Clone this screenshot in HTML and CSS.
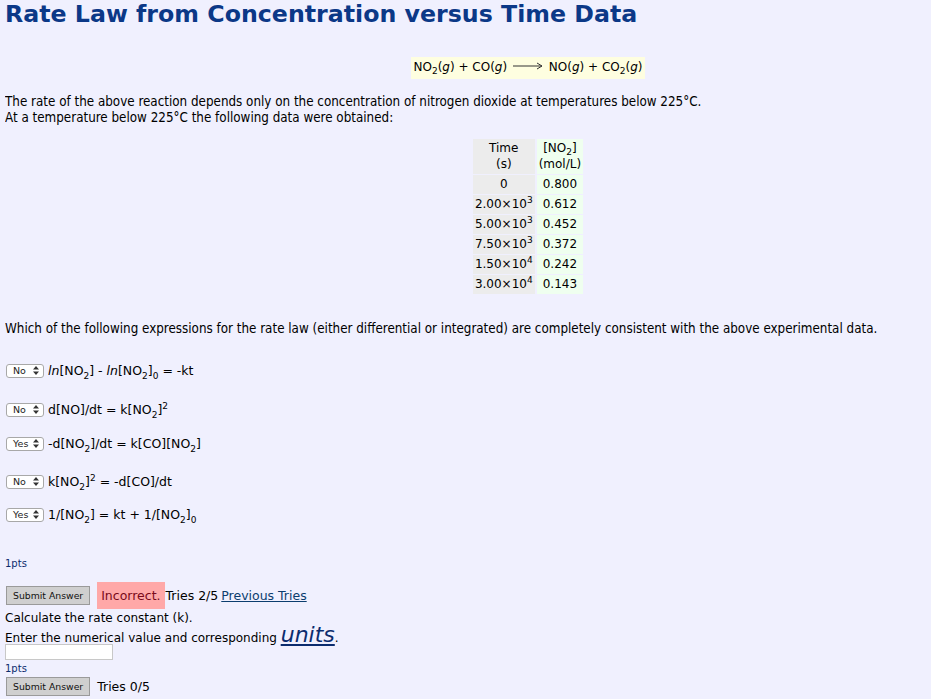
FILE: index.html
```html
<!DOCTYPE html>
<html lang="en">
<head>
    <meta charset="UTF-8">
    <title>Rate Law from Concentration versus Time Data</title>
    <link rel="stylesheet" href="styles.css">
</head>
<body>
    <h1 class="title">Rate Law from Concentration versus Time Data</h1>

    <div class="centered">
        <span class="reaction">NO<sub>2</sub>(<i>g</i>) + CO(<i>g</i>)
            <svg class="arrow" width="32" height="8" viewBox="0 0 32 8"><path d="M1 4H30M25 1L30 4L25 7" fill="none" stroke="#333" stroke-width="1"/></svg>
            NO(<i>g</i>) + CO<sub>2</sub>(<i>g</i>)</span>
    </div>

    <p class="intro">The rate of the above reaction depends only on the concentration of nitrogen dioxide at temperatures below 225°C.<br>
    At a temperature below 225°C the following data were obtained:</p>

    <div class="centered">
        <table class="data">
            <tr><td class="time">Time<br>(s)</td><td class="conc">[NO<sub>2</sub>]<br>(mol/L)</td></tr>
            <tr><td class="time">0</td><td class="conc">0.800</td></tr>
            <tr><td class="time">2.00×10<sup>3</sup></td><td class="conc">0.612</td></tr>
            <tr><td class="time">5.00×10<sup>3</sup></td><td class="conc">0.452</td></tr>
            <tr><td class="time">7.50×10<sup>3</sup></td><td class="conc">0.372</td></tr>
            <tr><td class="time">1.50×10<sup>4</sup></td><td class="conc">0.242</td></tr>
            <tr><td class="time">3.00×10<sup>4</sup></td><td class="conc">0.143</td></tr>
        </table>
    </div>

    <p class="question">Which of the following expressions for the rate law (either differential or integrated) are completely consistent with the above experimental data.</p>

    <div class="choices">
        <div class="choice"><span class="select">No<svg width="6" height="9" viewBox="0 0 6 9"><path d="M3 0L6 3.5H0ZM3 9L6 5.5H0Z" fill="#333"/></svg></span><span><i>ln</i>[NO<sub>2</sub>] - <i>ln</i>[NO<sub>2</sub>]<sub>0</sub> = -kt</span></div>
        <div class="choice"><span class="select">No<svg width="6" height="9" viewBox="0 0 6 9"><path d="M3 0L6 3.5H0ZM3 9L6 5.5H0Z" fill="#333"/></svg></span><span>d[NO]/dt = k[NO<sub>2</sub>]<sup>2</sup></span></div>
        <div class="choice"><span class="select">Yes<svg width="6" height="9" viewBox="0 0 6 9"><path d="M3 0L6 3.5H0ZM3 9L6 5.5H0Z" fill="#333"/></svg></span><span>-d[NO<sub>2</sub>]/dt = k[CO][NO<sub>2</sub>]</span></div>
        <div class="choice"><span class="select">No<svg width="6" height="9" viewBox="0 0 6 9"><path d="M3 0L6 3.5H0ZM3 9L6 5.5H0Z" fill="#333"/></svg></span><span>k[NO<sub>2</sub>]<sup>2</sup> = -d[CO]/dt</span></div>
        <div class="choice"><span class="select">Yes<svg width="6" height="9" viewBox="0 0 6 9"><path d="M3 0L6 3.5H0ZM3 9L6 5.5H0Z" fill="#333"/></svg></span><span>1/[NO<sub>2</sub>] = kt + 1/[NO<sub>2</sub>]<sub>0</sub></span></div>
    </div>

    <div class="pts pts-first">1pts</div>
    <div class="submit-row">
        <button class="submit">Submit Answer</button>
        <span class="incorrect">Incorrect.</span>
        <span class="tries">Tries 2/5</span>
        <a href="#" class="prev">Previous Tries</a>
    </div>

    <div class="part">
        <div class="line">Calculate the rate constant (k).</div>
        <div class="line tall">Enter the numerical value and corresponding <a href="#" class="units">units</a>.</div>
        <input type="text" class="answer">
    </div>

    <div class="pts pts-second">1pts</div>
    <div class="submit-row last">
        <button class="submit">Submit Answer</button>
        <span class="tries plain">Tries 0/5</span>
    </div>
</body>
</html>
```

FILE: styles.css
```css
body {
    background-color: #f0f0fe;
    font-family: 'DejaVu Sans', Verdana, sans-serif;
    font-size: 12px;
    color: #000;
    margin: 0 5px;
}

sub, sup {
    font-size: 9px;
    line-height: 0;
}

.title {
    font-family: 'DejaVu Sans', Verdana, sans-serif;
    font-size: 23.7px;
    font-weight: bold;
    color: #0b3887;
    margin: 0;
    height: 57px;
}

.centered {
    padding-left: 125px;
    text-align: center;
}

.reaction {
    display: inline-block;
    background-color: #fefee0;
    padding: 3px 3px 5px;
    font-size: 12px;
}

.arrow {
    vertical-align: 1px;
    margin: 0 1px;
}

.intro {
    font-family: 'DejaVu Sans Condensed', Tahoma, sans-serif;
    font-size: 13.3px;
    line-height: 16px;
    margin: 15px 0 12px;
}

.data {
    display: inline-table;
    border-spacing: 2px 1px;
    font-size: 12px;
}

.data td {
    padding: 1px 2px 2px;
    text-align: center;
    line-height: 16px;
}

.data td.time {
    background-color: #ececec;
}

.data td.conc {
    background-color: #efffef;
}

.question {
    font-family: 'DejaVu Sans Condensed', Tahoma, sans-serif;
    font-size: 13.3px;
    margin: 26px 0 0;
}

.choices {
    margin-top: 25px;
}

.choice {
    display: flex;
    align-items: center;
    gap: 4px;
    height: 19px;
    margin-bottom: 15px;
    font-size: 12.5px;
}

.choice:nth-child(1) {
    margin-bottom: 20px;
}

.choice:nth-child(3) {
    margin-bottom: 19px;
}

.choice:nth-child(4) {
    margin-bottom: 14px;
}

.choice:last-child {
    margin-bottom: 0;
}

.select {
    display: inline-flex;
    align-items: center;
    justify-content: space-between;
    box-sizing: border-box;
    width: 38px;
    height: 14px;
    padding: 0 4px 0 6px;
    margin-left: 1px;
    border: 1px solid #a8a8a8;
    border-radius: 3px;
    background-color: #fff;
    font-size: 9.5px;
    color: #222;
}

.pts {
    font-size: 10px;
    line-height: 12px;
    color: #0b2c6e;
}

.pts-first {
    margin-top: 34px;
    margin-bottom: 13px;
}

.pts-second {
    margin-top: 3px;
}

.submit-row {
    display: flex;
    align-items: center;
    gap: 7px;
    font-size: 12.5px;
    height: 25px;
}

.submit-row.last {
    height: 19px;
    margin-top: 2px;
}

.submit {
    font-family: 'DejaVu Sans', Verdana, sans-serif;
    font-size: 9.3px;
    background-color: #cfcfcf;
    border: 1px solid #9a9a9a;
    border-radius: 0;
    padding: 0 6px;
    height: 19px;
    margin-left: 1px;
    color: #111;
}

.incorrect {
    background-color: #ffa8a8;
    color: #7a0a1a;
    padding: 6px 4px 6px;
}

.tries {
    margin-left: -6px;
}

.tries.plain {
    margin-left: 0;
}

.prev {
    color: #0b3d6e;
    margin-left: -4px;
}

.part {
    font-size: 12px;
    margin-top: 2px;
}

.line {
    line-height: 16px;
}

.line.tall {
    line-height: 12px;
    padding-top: 3px;
}

.units {
    font-size: 22px;
    font-style: italic;
    color: #0b2c6e;
    line-height: 12px;
}

.answer {
    display: block;
    box-sizing: border-box;
    width: 108px;
    height: 16px;
    border: 1px solid #c8c8c8;
    margin: 0;
    padding: 0;
    background: #fff;
}
```
